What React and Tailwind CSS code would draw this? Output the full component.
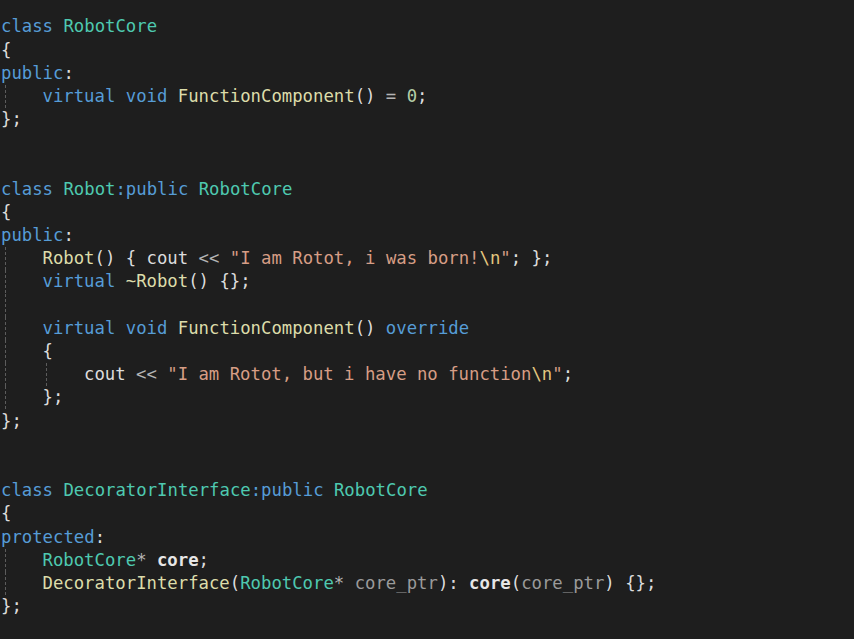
import React from "react";

const K = "text-[#569cd6]";
const T = "text-[#4ec9b0]";
const F = "text-[#dcdcaa]";
const S = "text-[#d69d85]";
const E = "text-[#e3c77f]";
const N = "text-[#b5cea8]";
const D = "text-[#dcdcdc]";
const O = "text-[#b4b4b4]";
const P = "text-[#9a9a9a]";
const M = "text-[#e6e6e6] font-bold";

// each line: [guides, tokens]
const lines = [
  [0, [[K, "class "], [T, "RobotCore"]]],
  [0, [[D, "{"]]],
  [0, [[K, "public"], [D, ":"]]],
  [1, [[K, "virtual void "], [F, "FunctionComponent"], [D, "() "], [O, "="], [D, " "], [N, "0"], [D, ";"]]],
  [0, [[D, "};"]]],
  [0, []],
  [0, []],
  [0, [[K, "class "], [T, "Robot"], [K, ":public "], [T, "RobotCore"]]],
  [0, [[D, "{"]]],
  [0, [[K, "public"], [D, ":"]]],
  [1, [[F, "Robot"], [D, "() { "], [D, "cout "], [O, "<<"], [D, " "], [S, "\"I am Rotot, i was born!"], [E, "\\n"], [S, "\""], [D, "; };"]]],
  [1, [[K, "virtual "], [F, "~Robot"], [D, "() {};"]]],
  [1, []],
  [1, [[K, "virtual void "], [F, "FunctionComponent"], [D, "() "], [K, "override"]]],
  [1, [[D, "{"]]],
  [2, [[D, "cout "], [O, "<<"], [D, " "], [S, "\"I am Rotot, but i have no function"], [E, "\\n"], [S, "\""], [D, ";"]]],
  [1, [[D, "};"]]],
  [0, [[D, "};"]]],
  [0, []],
  [0, []],
  [0, [[K, "class "], [T, "DecoratorInterface"], [K, ":public "], [T, "RobotCore"]]],
  [0, [[D, "{"]]],
  [0, [[K, "protected"], [D, ":"]]],
  [1, [[T, "RobotCore"], [O, "*"], [D, " "], [M, "core"], [D, ";"]]],
  [1, [[F, "DecoratorInterface"], [D, "("], [T, "RobotCore"], [O, "*"], [D, " "], [P, "core_ptr"], [D, "): "], [M, "core"], [D, "("], [P, "core_ptr"], [D, ") {};"]]],
  [0, [[D, "};"]]],
];

function Guide() {
  return (
    <div className="flex h-full w-[41.5px] shrink-0 pl-[3.5px]">
      <div className="h-full w-px bg-[repeating-linear-gradient(to_bottom,#5c5c5c_0px,#5c5c5c_3px,transparent_3px,transparent_5px)]" />
    </div>
  );
}

export default function App() {
  return (
    <div className="h-[639px] w-[854px] overflow-hidden bg-[#1e1e1e] pt-[15.4px] pl-[1px] font-['DejaVu_Sans_Mono',monospace] text-[17.3px]">
      {lines.map(([g, toks], i) => (
        <div key={i} className="flex h-[23.2px] items-stretch">
          {g >= 1 && <Guide />}
          {g >= 2 && <Guide />}
          <span className="whitespace-pre leading-[23.2px]">
            {toks.map(([c, t], j) => (
              <span key={j} className={c}>
                {t}
              </span>
            ))}
          </span>
        </div>
      ))}
    </div>
  );
}
